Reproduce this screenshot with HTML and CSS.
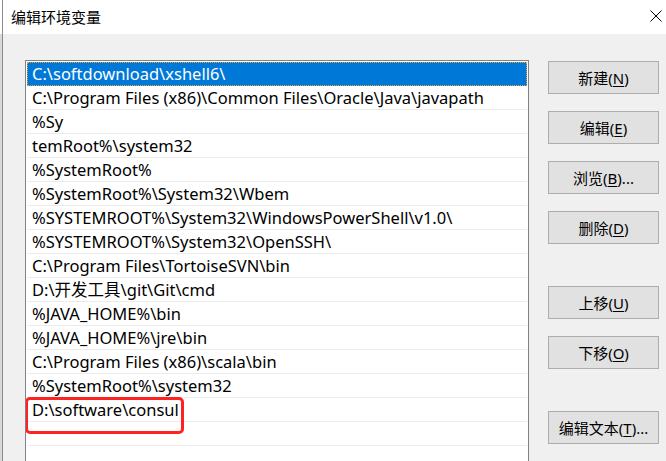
FILE: index.html
```html
<!DOCTYPE html>
<html lang="zh-CN">
<head>
<meta charset="utf-8">
<title>编辑环境变量</title>
<link rel="stylesheet" href="styles.css">
</head>
<body>
<div class="screen">
  <div class="edge"></div>
  <div class="dialog">
    <div class="titlebar">
      <span class="title">编辑环境变量</span>
      <svg class="close" width="12" height="12" viewBox="0 0 12 12"><path d="M0.5 0.5 L11.5 11.5 M11.5 0.5 L0.5 11.5" stroke="#000" stroke-width="1" fill="none"/></svg>
    </div>
    <div class="content">
      <div class="list">
        <div class="row selected">C:\softdownload\xshell6\</div>
        <div class="row">C:\Program Files (x86)\Common Files\Oracle\Java\javapath</div>
        <div class="row">%Sy</div>
        <div class="row">temRoot%\system32</div>
        <div class="row">%SystemRoot%</div>
        <div class="row">%SystemRoot%\System32\Wbem</div>
        <div class="row">%SYSTEMROOT%\System32\WindowsPowerShell\v1.0\</div>
        <div class="row">%SYSTEMROOT%\System32\OpenSSH\</div>
        <div class="row">C:\Program Files\TortoiseSVN\bin</div>
        <div class="row">D:\开发工具\git\Git\cmd</div>
        <div class="row">%JAVA_HOME%\bin</div>
        <div class="row">%JAVA_HOME%\jre\bin</div>
        <div class="row">C:\Program Files (x86)\scala\bin</div>
        <div class="row">%SystemRoot%\system32</div>
        <div class="row">D:\software\consul</div>
        <div class="row"></div>
        <div class="row"></div>
        <div class="highlight"></div>
      </div>
      <div class="buttons">
        <div class="btn">新建(<u>N</u>)</div>
        <div class="btn">编辑(<u>E</u>)</div>
        <div class="btn">浏览(<u>B</u>)...</div>
        <div class="btn">删除(<u>D</u>)</div>
        <div class="btn spaced">上移(<u>U</u>)</div>
        <div class="btn">下移(<u>O</u>)</div>
        <div class="btn spaced">编辑文本(<u>T</u>)...</div>
      </div>
    </div>
  </div>
</div>
</body>
</html>
```
FILE: styles.css
```css
html, body {
  margin: 0;
  padding: 0;
  width: 666px;
  height: 461px;
  overflow: hidden;
  background: #f0f0f0;
}
.screen {
  display: flex;
  width: 666px;
  height: 461px;
  font-family: "Noto Sans", "Noto Sans CJK SC", sans-serif;
  font-size: 15px;
  color: #000;
}
.edge {
  width: 2px;
  flex: none;
  background: linear-gradient(#ffffff 0 34px, #d9d9d9 34px);
}
.dialog {
  flex: 1;
  display: flex;
  flex-direction: column;
  border-left: 1px solid #8c8c8c;
  min-width: 0;
}
.titlebar {
  height: 34px;
  flex: none;
  background: #ffffff;
  display: flex;
  align-items: center;
  justify-content: space-between;
  padding: 0 4px 0 8px;
}
.title {
  font-family: "Noto Sans CJK SC", sans-serif;
  font-size: 15px;
  line-height: 20px;
}
.close {
  display: block;
  margin-top: -2px;
}
.content {
  flex: 1;
  min-height: 0;
  background: #f0f0f0;
  display: flex;
  align-items: flex-start;
  padding: 26px 0 0 22px;
  overflow: hidden;
}
.list {
  position: relative;
  align-self: stretch;
  width: 504px;
  box-sizing: border-box;
  border: 1px solid #828282;
  border-bottom: 0;
  background: #ffffff;
  padding: 1px 1px 0;
  overflow: hidden;
  font-size: 16.5px;
}
.row {
  height: 24px;
  box-sizing: border-box;
  border-bottom: 1px solid #ececec;
  padding-left: 5px;
  line-height: 23px;
  white-space: nowrap;
}
.row.selected {
  background: #0078d7;
  color: #ffffff;
  border: 1px dotted #f0a030;
  padding-left: 4px;
  line-height: 22px;
}
.highlight {
  position: absolute;
  left: -1px;
  top: 336px;
  width: 159px;
  height: 37px;
  box-sizing: border-box;
  border: 3px solid #ff2222;
  border-radius: 5px;
}
.buttons {
  display: flex;
  flex-direction: column;
  gap: 17px;
  margin-left: 19px;
  margin-top: 1px;
}
.btn {
  width: 111px;
  height: 33px;
  box-sizing: border-box;
  border: 1px solid #adadad;
  background: #e1e1e1;
  display: flex;
  align-items: center;
  justify-content: center;
  line-height: 20px;
}
.btn.spaced {
  margin-top: 25px;
}
.btn u {
  text-decoration-thickness: 1px;
  text-underline-offset: 2px;
}
```
